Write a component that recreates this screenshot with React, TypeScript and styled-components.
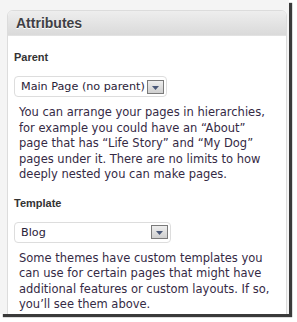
import React from "react";
import styled, { createGlobalStyle } from "styled-components";

const Global = createGlobalStyle`
  html, body { margin: 0; padding: 0; background: #ffffff; }
  body { width: 297px; height: 322px; overflow: hidden; }
`;

const Frame = styled.div`
  width: 289px;
  height: 314px;
  box-sizing: border-box;
  padding: 10px 2px 0 7px;
  background: #f4f4f4;
  box-shadow: 3px 3px 1px #3a3a3a;
  overflow: hidden;
`;

const Panel = styled.section`
  width: 280px;
  height: 340px;
  box-sizing: border-box;
  border: 1px solid #dcdcdc;
  border-radius: 6px 6px 0 0;
  background: #ffffff;
  overflow: hidden;
`;

const Header = styled.h3`
  margin: 0;
  height: 24px;
  display: flex;
  align-items: center;
  padding: 0 8px;
  background: linear-gradient(#eeeeee, #dadada);
  border-bottom: 1px solid #e2e2e2;
  font-family: "Liberation Sans", Arial, sans-serif;
  font-weight: bold;
  font-size: 14px;
  color: #3f3f45;
  text-shadow: 0 1px 0 #ffffff;
`;

const Body = styled.div`
  padding: 14px 8px 0 6px;
  display: flex;
  flex-direction: column;
  align-items: flex-start;
`;

const Label = styled.h4<{ $gap?: number }>`
  margin: ${(p) => p.$gap ?? 0}px 0 12px;
  font-family: "Liberation Sans", Arial, sans-serif;
  font-weight: bold;
  font-size: 11px;
  line-height: 14px;
  color: #333333;
`;

const Select = styled.div<{ $width: number }>`
  width: ${(p) => p.$width}px;
  height: 21px;
  box-sizing: border-box;
  border: 1px solid #dddddd;
  border-radius: 4px;
  background: #ffffff;
  display: flex;
  align-items: center;
  justify-content: space-between;
  padding: 0 2px 0 6px;
  font-family: "DejaVu Sans", Verdana, sans-serif;
  font-size: 11.2px;
  color: #2a2238;
  white-space: nowrap;
  overflow: hidden;
`;

const ArrowBox = styled.span`
  flex: 0 0 17px;
  height: 14px;
  box-sizing: border-box;
  border: 1px solid #7a7a7a;
  background: linear-gradient(#eeeeee, #cfcfcf);
  display: flex;
  align-items: center;
  justify-content: center;
  padding-top: 2px;
`;

const Para = styled.p`
  margin: 8px 0 0 5px;
  width: 254px;
  font-family: "DejaVu Sans", Verdana, sans-serif;
  font-size: 11.5px;
  line-height: 15.5px;
  color: #352a45;
`;

const Arrow = () => (
  <svg width="7" height="4" viewBox="0 0 7 4">
    <polygon points="0,0 7,0 3.5,4" fill="#4a5878" />
  </svg>
);

export default function App() {
  return (
    <>
      <Global />
      <Frame>
        <Panel>
          <Header>Attributes</Header>
          <Body>
            <Label>Parent</Label>
            <Select $width={153}>
              <span>Main Page (no parent)</span>
              <ArrowBox>
                <Arrow />
              </ArrowBox>
            </Select>
            <Para>
              You can arrange your pages in hierarchies, for example you could
              have an “About” page that has “Life Story” and “My Dog” pages
              under it. There are no limits to how deeply nested you can make
              pages.
            </Para>
            <Label $gap={13}>Template</Label>
            <Select $width={157}>
              <span>Blog</span>
              <ArrowBox>
                <Arrow />
              </ArrowBox>
            </Select>
            <Para>
              Some themes have custom templates you can use for certain pages
              that might have additional features or custom layouts. If so,
              you’ll see them above.
            </Para>
          </Body>
        </Panel>
      </Frame>
    </>
  );
}
